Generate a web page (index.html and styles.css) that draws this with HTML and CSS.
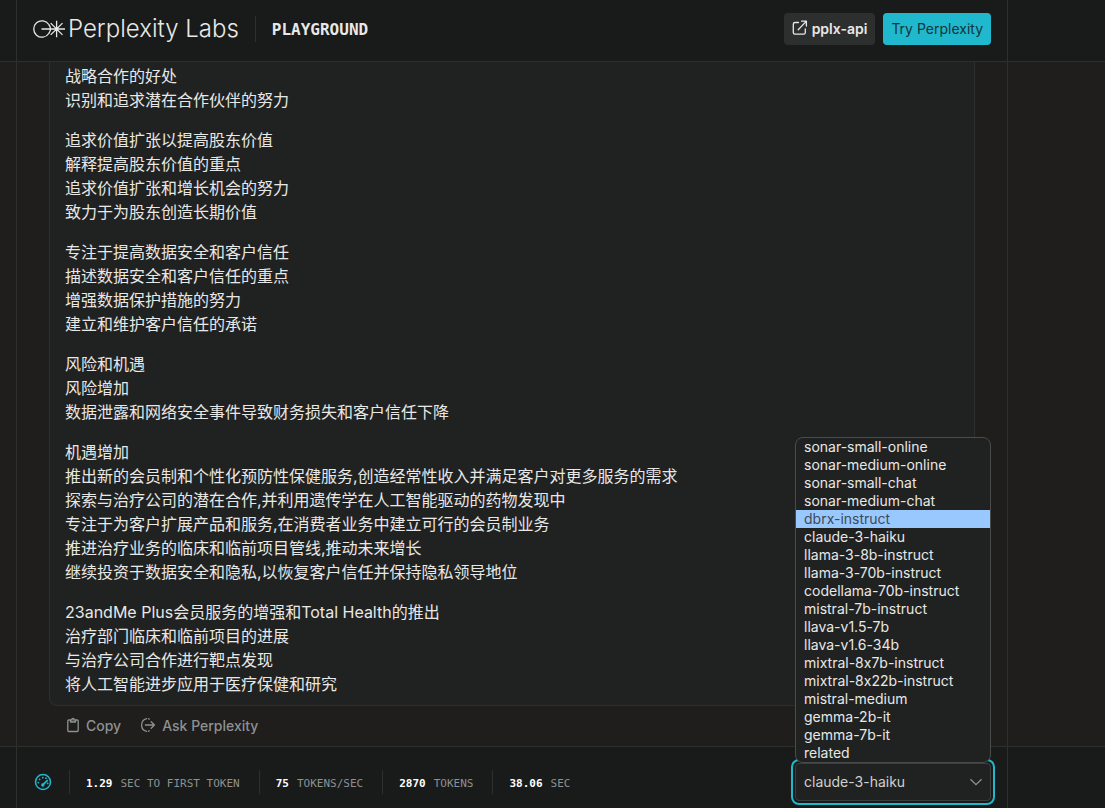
FILE: index.html
```html
<!DOCTYPE html>
<html lang="zh-CN">
<head>
  <meta charset="UTF-8" />
  <meta name="viewport" content="width=device-width, initial-scale=1" />
  <title>Perplexity Labs</title>
  <link rel="stylesheet" href="styles.css">
</head>
<body>
  <header class="header">
    <div class="column header-row">
      <a class="brand" href="#">
        <svg class="brand-mark" viewBox="0 0 32 20" fill="none" stroke="currentColor" stroke-width="1.3">
          <path d="M15.800 5.500A8.200 8.200 0 1 0 15.800 14.500M8.500 10H32M23.600 1.700v16.600M17.700 4.100l11.800 11.800M29.500 4.100L17.700 15.900M15.800 5.500c2 2.600 2 6.400 0 9" />
        </svg>
        <span>Perplexity Labs</span>
      </a>
      <span class="playground">PLAYGROUND</span>
      <nav class="header-links">
        <a class="btn btn-dark" href="#">
          <svg width="16" height="16" viewBox="0 0 16 16" fill="none" stroke="currentColor" stroke-width="1.3" stroke-linecap="round" stroke-linejoin="round">
            <path d="M6.5 2.5H3a1.7 1.7 0 0 0-1.7 1.7v8.3A1.7 1.7 0 0 0 3 14.2h8.600a1.7 1.7 0 0 0 1.7-1.7V8.8M6.2 9.8l8-8.4M9.6 1.2h4.8V6" />
          </svg>
          pplx-api
        </a>
        <a class="btn btn-cyan" href="#">Try Perplexity</a>
      </nav>
    </div>
  </header>

  <main class="main">
    <div class="column chat">
      <article class="message">
        <p>战略合作的好处<br>识别和追求潜在合作伙伴的努力</p>
        <p>追求价值扩张以提高股东价值<br>解释提高股东价值的重点<br>追求价值扩张和增长机会的努力<br>致力于为股东创造长期价值</p>
        <p>专注于提高数据安全和客户信任<br>描述数据安全和客户信任的重点<br>增强数据保护措施的努力<br>建立和维护客户信任的承诺</p>
        <p>风险和机遇<br>风险增加<br>数据泄露和网络安全事件导致财务损失和客户信任下降</p>
        <p>机遇增加<br>推出新的会员制和个性化预防性保健服务,创造经常性收入并满足客户对更多服务的需求<br>探索与治疗公司的潜在合作,并利用遗传学在人工智能驱动的药物发现中<br>专注于为客户扩展产品和服务,在消费者业务中建立可行的会员制业务<br>推进治疗业务的临床和临前项目管线,推动未来增长<br>继续投资于数据安全和隐私,以恢复客户信任并保持隐私领导地位</p>
        <p>23andMe Plus会员服务的增强和Total Health的推出<br>治疗部门临床和临前项目的进展<br>与治疗公司合作进行靶点发现<br>将人工智能进步应用于医疗保健和研究</p>
      </article>
      <div class="actions">
        <button class="action" type="button">
          <svg width="14" height="16" viewBox="0 0 14 16" fill="none" stroke="currentColor" stroke-width="1.3" stroke-linejoin="round">
            <path d="M4.5 3H2.8a1 1 0 0 0-1 1v9.5a1 1 0 0 0 1 1h8.4a1 1 0 0 0 1-1V4a1 1 0 0 0-1-1H9.5" />
            <path d="M4.5 5V2.8h1.2a1.3 1.3 0 0 1 2.6 0h1.2V5z" fill="currentColor" fill-opacity=".4" />
          </svg>
          Copy
        </button>
        <button class="action" type="button">
          <svg width="16" height="16" viewBox="0 0 16 16" fill="none" stroke="currentColor" stroke-width="1.3" stroke-linecap="round" stroke-linejoin="round">
            <path d="M6.600 1.600A6.600 6.600 0 0 0 6.600 14.400M8.600 14.200l.6-.3M8.600 1.800l.6.3M5.400 8h9M11.200 4.800L14.400 8l-3.200 3.200" />
          </svg>
          Ask Perplexity
        </button>
      </div>
    </div>
  </main>

  <footer class="footer">
    <div class="column footer-row">
      <svg class="gauge" width="18" height="18" viewBox="0 0 18 18" fill="none" stroke="currentColor" stroke-width="1.5" stroke-linecap="round">
        <circle cx="9" cy="9" r="7.500" />
        <path d="M9 11.600l4.200-4" stroke-width="1.8" />
        <circle cx="8.800" cy="12" r="1.700" fill="currentColor" stroke="none" />
        <path d="M4.300 9.600v0M5.600 6.400v0M8.800 4.700v0M12 5.200v0M13.700 10.400v0" stroke-width="1.8" />
      </svg>
      <div class="stats">
        <div class="stat"><b>1.29</b><span>SEC TO FIRST TOKEN</span></div>
        <div class="stat"><b>75</b><span>TOKENS/SEC</span></div>
        <div class="stat"><b>2870</b><span>TOKENS</span></div>
        <div class="stat"><b>38.06</b><span>SEC</span></div>
      </div>
      <div class="model">
        <select class="model-select" aria-label="Model">
          <option>claude-3-haiku</option>
        </select>
        <svg class="chevron" width="14" height="8" viewBox="0 0 14 8" fill="none" stroke="currentColor" stroke-width="1.3">
          <path d="M1.5 1.2L7 6.7l5.500-5.500" />
        </svg>
        <ul class="model-menu" role="listbox" aria-label="Models">
          <li role="option">sonar-small-online</li>
          <li role="option">sonar-medium-online</li>
          <li role="option">sonar-small-chat</li>
          <li role="option">sonar-medium-chat</li>
          <li role="option" class="active">dbrx-instruct</li>
          <li role="option">claude-3-haiku</li>
          <li role="option">llama-3-8b-instruct</li>
          <li role="option">llama-3-70b-instruct</li>
          <li role="option">codellama-70b-instruct</li>
          <li role="option">mistral-7b-instruct</li>
          <li role="option">llava-v1.5-7b</li>
          <li role="option">llava-v1.6-34b</li>
          <li role="option">mixtral-8x7b-instruct</li>
          <li role="option">mixtral-8x22b-instruct</li>
          <li role="option">mistral-medium</li>
          <li role="option">gemma-2b-it</li>
          <li role="option">gemma-7b-it</li>
          <li role="option">related</li>
        </ul>
      </div>
    </div>
  </footer>
</body>
</html>
```
FILE: styles.css
```css
* {
  box-sizing: border-box;
}

body {
  margin: 0;
  min-height: 100vh;
  display: flex;
  flex-direction: column;
  background: #1f1e1c;
  color: #e8e8e6;
  font-family: Inter, "Noto Sans CJK SC", sans-serif;
  font-size: 14px;
  font-variant-ligatures: no-contextual;
}

a {
  color: inherit;
  text-decoration: none;
}

.column {
  margin: 0 97px 0 16px;
  border-left: 1px solid #2d2f2f;
  border-right: 1px solid #2d2f2f;
}

/* header */
.header {
  background: #191a1a;
  border-bottom: 1px solid #2d2f2f;
}

.header-row {
  display: flex;
  align-items: center;
  padding: 13px 16px 16px;
}

.brand {
  display: flex;
  align-items: center;
  gap: 3px;
  font-size: 24px;
  font-weight: 300;
  line-height: 26px;
}

.brand-mark {
  width: 32px;
  height: 20px;
}

.playground {
  margin-left: 16px;
  padding: 2px 0 0 16px;
  border-left: 1px solid #2d2f2f;
  font-family: "DejaVu Sans Mono", monospace;
  font-size: 16px;
  font-weight: bold;
  line-height: 24px;
}

.header-links {
  display: flex;
  gap: 8px;
  margin-left: auto;
}

.btn {
  display: flex;
  align-items: center;
  gap: 4px;
  height: 32px;
  padding: 0 8px 2px;
  border-radius: 4px;
}

.btn-dark {
  background: #2d2e2e;
  font-weight: 600;
}

.btn-cyan {
  background: #20b8cd;
  color: #13343b;
}

/* chat */
.main {
  flex: 1;
  display: flex;
}

.chat {
  flex: 1;
  display: flex;
  flex-direction: column;
  padding: 0 32px;
}

.message {
  flex: 1;
  padding: 2px 15px 8px;
  background: #202222;
  border: 1px solid #2d2f2f;
  border-top: 0;
  border-radius: 0 0 8px 8px;
  font-size: 16px;
  line-height: 24px;
}

.message p {
  margin: 0 0 16px;
}

.message p:last-child {
  margin-bottom: 0;
}

.actions {
  display: flex;
  gap: 19px;
  padding: 8px 17px;
}

.action {
  display: flex;
  align-items: center;
  gap: 6px;
  height: 24px;
  padding: 0 0 2px;
  border: 0;
  background: none;
  color: #8d9191;
  font: inherit;
  font-weight: 500;
}

/* footer */
.footer {
  background: #191a1a;
  border-top: 1px solid #2d2f2f;
}

.footer-row {
  display: flex;
  align-items: center;
  padding: 16px 16px 7px;
}

.gauge {
  margin: 0 17px 0 1px;
  color: #20b8cd;
}

.stats {
  display: flex;
  font-family: "DejaVu Sans Mono", monospace;
  font-size: 11px;
  line-height: 20px;
}

.stat {
  display: flex;
  gap: 8px;
  padding: 4px 19px 0 16px;
  border-left: 1px solid #2d2f2f;
}

.stat b {
  color: #fff;
}

.stat span {
  color: #8d9191;
}

.model {
  position: relative;
  width: 196px;
  margin-left: auto;
}

.model-select {
  display: block;
  width: 100%;
  height: 38px;
  padding: 0 8px 2px;
  appearance: none;
  background: #202222;
  border: 1px solid #3c3f3f;
  border-radius: 4px;
  outline: 2px solid #20b8cd;
  outline-offset: 2px;
  color: #d0d0ce;
  font: inherit;
}

.chevron {
  position: absolute;
  right: 8px;
  top: 15px;
  color: #8d9191;
  pointer-events: none;
}

.model-menu {
  position: absolute;
  left: 0;
  right: 0;
  bottom: 100%;
  margin: 0;
  padding: 0;
  list-style: none;
  background: #202222;
  border: 1px solid #4a4c4c;
  border-radius: 8px;
  line-height: 18px;
}

.model-menu li {
  padding: 0 8px;
}

.model-menu .active {
  background: #99c8ff;
  color: #3f4a58;
}
```
